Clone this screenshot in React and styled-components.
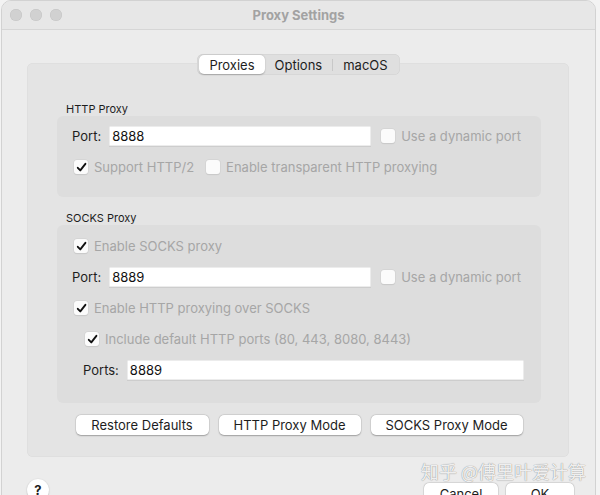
import React from "react";
import styled, { createGlobalStyle } from "styled-components";

const GlobalStyle = createGlobalStyle`
  html, body {
    margin: 0;
    height: 495px;
    overflow: hidden;
    background: #f3f3f3;
  }
  body {
    font-family: Inter, "Liberation Sans", "Noto Sans CJK SC", sans-serif;
    font-size: 13px;
    color: #1d1d1d;
  }
`;

const Window = styled.div`
  position: relative;
  margin-left: 1px;
  width: 593px;
  height: 530px;
  background: #ececec;
  border: 1px solid #d2d2d2;
  border-radius: 10px 10px 0 0;
  overflow: hidden;
`;

const TitleBar = styled.div`
  height: 28px;
  display: grid;
  grid-template-columns: 1fr auto 1fr;
  align-items: center;
  background: #e7e7e7;
  border-bottom: 1px solid #d6d6d6;
  padding: 0 8px;
`;

const Lights = styled.div`
  display: flex;
  gap: 8px;
`;

const Light = styled.span`
  width: 12px;
  height: 12px;
  border-radius: 50%;
  background: #d1d1d1;
  box-shadow: inset 0 0 0 0.5px #c4c4c4;
`;

const Title = styled.div`
  font-weight: 700;
  font-size: 13px;
  color: #a2a2a2;
`;

const Content = styled.div`
  padding: 24px 25px 0 25px;
  display: flex;
  flex-direction: column;
`;

const TabBar = styled.div`
  position: relative;
  z-index: 1;
  align-self: center;
  display: flex;
  align-items: center;
  height: 21px;
  padding: 0 2px;
  background: #dfdfdf;
  border-radius: 6px;
  box-shadow: inset 0 0 0 0.5px #d0d0d0;
`;

const Tab = styled.div`
  height: 19px;
  display: flex;
  align-items: center;
  padding: 0 10px;
  border-radius: 5px;
  font-size: 13px;
  color: #1d1d1d;
  background: ${(p) => (p.$active ? "#ffffff" : "transparent")};
  box-shadow: ${(p) =>
    p.$active ? "0 0.5px 1.5px rgba(0,0,0,0.25)" : "none"};
`;

const TabDivider = styled.span`
  width: 1px;
  height: 12px;
  background: #c8c8c8;
`;

const Panel = styled.div`
  margin-top: -12px;
  margin-right: 1px;
  padding: 39px 28px 22px 30px;
  background: #e4e4e4;
  border-radius: 6px;
  box-shadow: inset 0 0 0 0.5px #dadada;
`;

const SectionLabel = styled.div`
  font-size: 11px;
  line-height: 14px;
  padding-left: 9px;
  margin-top: ${(p) => p.$top || 0}px;
  color: #1d1d1d;
`;

const Box = styled.div`
  background: #dddddd;
  border-radius: 6px;
  padding: ${(p) => p.$pad};
  display: flex;
  flex-direction: column;
  gap: 11px;
`;

const Row = styled.div`
  height: 20px;
  display: flex;
  align-items: center;
  padding-left: ${(p) => p.$indent || 0}px;
`;

const FieldLabel = styled.span`
  font-size: 13px;
  color: #1d1d1d;
  margin-right: 8px;
`;

const Input = styled.div`
  height: 20px;
  box-sizing: border-box;
  width: ${(p) => (p.$width ? `${p.$width}px` : "auto")};
  flex: ${(p) => (p.$width ? "none" : 1)};
  background: #ffffff;
  box-shadow: 0 0.5px 0 #bdbdbd, inset 0 0 0 0.5px #dadada;
  padding-left: 3px;
  display: flex;
  align-items: center;
  font-size: 13px;
  color: #111;
`;

const CheckLabel = styled.label`
  display: flex;
  align-items: center;
  gap: 6px;
  margin-left: ${(p) => p.$left || 0}px;
  color: #a6a6a6;
  font-size: 13px;
`;

const Box14 = styled.span`
  width: 14px;
  height: 14px;
  border-radius: 3px;
  background: #fbfbfb;
  box-shadow: 0 0 0 0.5px #cfcfcf, 0 0.5px 1px rgba(0, 0, 0, 0.12);
  display: flex;
  align-items: center;
  justify-content: center;
`;

function Check({ checked, children, left }) {
  return (
    <CheckLabel $left={left}>
      <Box14>
        {checked && (
          <svg width="11" height="11" viewBox="0 0 11 11">
            <path
              d="M1.8 5.8 L4.3 8.4 L9.4 1.8"
              fill="none"
              stroke="#111"
              strokeWidth="1.9"
              strokeLinecap="round"
              strokeLinejoin="round"
            />
          </svg>
        )}
      </Box14>
      {children}
    </CheckLabel>
  );
}

const ButtonRow = styled.div`
  margin-top: 12px;
  display: flex;
  justify-content: center;
  gap: 10px;
`;

const Button = styled.button`
  height: ${(p) => p.$h || 20}px;
  width: ${(p) => p.$w}px;
  padding: 0;
  border: none;
  border-radius: 5px;
  background: #ffffff;
  font-family: inherit;
  font-size: 13px;
  color: #1d1d1d;
  box-shadow: 0 0.5px 1.5px rgba(0, 0, 0, 0.28), 0 0 0 0.5px rgba(0, 0, 0, 0.08);
`;

const Footer = styled.div`
  display: flex;
  justify-content: space-between;
  align-items: flex-start;
  padding: 22px 0 0 0;
  margin-right: -4px;
`;

const HelpButton = styled.div`
  width: 22px;
  height: 22px;
  border-radius: 50%;
  background: #ffffff;
  box-shadow: 0 0.5px 1.5px rgba(0, 0, 0, 0.3);
  display: flex;
  align-items: center;
  justify-content: center;
  font-weight: 700;
  font-size: 13px;
`;

const DialogButtons = styled.div`
  margin-top: 4px;
  display: flex;
  gap: 8px;
`;

const Watermark = styled.div`
  position: absolute;
  left: 419px;
  top: 457px;
  font-family: "Noto Sans CJK SC", sans-serif;
  font-size: 18px;
  letter-spacing: 0;
  color: rgba(255, 255, 255, 0.9);
  text-shadow: 0 0 1px rgba(0, 0, 0, 0.35), 0 0 1px rgba(0, 0, 0, 0.25);
`;

export default function App() {
  return (
    <>
      <GlobalStyle />
      <Window>
        <TitleBar>
          <Lights>
            <Light />
            <Light />
            <Light />
          </Lights>
          <Title>Proxy Settings</Title>
          <span />
        </TitleBar>
        <Content>
          <TabBar>
            <Tab $active>Proxies</Tab>
            <Tab>Options</Tab>
            <TabDivider />
            <Tab>macOS</Tab>
          </TabBar>
          <Panel>
            <SectionLabel>HTTP Proxy</SectionLabel>
            <Box $pad="10px 17px 20px 15px">
              <Row>
                <FieldLabel>Port:</FieldLabel>
                <Input $width={262}>8888</Input>
                <Check left={10}>Use a dynamic port</Check>
              </Row>
              <Row $indent={2}>
                <Check checked>Support HTTP/2</Check>
                <Check left={12}>Enable transparent HTTP proxying</Check>
              </Row>
            </Box>
            <SectionLabel $top={14}>SOCKS Proxy</SectionLabel>
            <Box $pad="11px 17px 23px 15px">
              <Row $indent={2}>
                <Check checked>Enable SOCKS proxy</Check>
              </Row>
              <Row>
                <FieldLabel>Port:</FieldLabel>
                <Input $width={262}>8889</Input>
                <Check left={10}>Use a dynamic port</Check>
              </Row>
              <Row $indent={2}>
                <Check checked>Enable HTTP proxying over SOCKS</Check>
              </Row>
              <Row $indent={13}>
                <Check checked>Include default HTTP ports (80, 443, 8080, 8443)</Check>
              </Row>
              <Row $indent={11}>
                <FieldLabel>Ports:</FieldLabel>
                <Input>8889</Input>
              </Row>
            </Box>
            <ButtonRow>
              <Button $w={133}>Restore Defaults</Button>
              <Button $w={142}>HTTP Proxy Mode</Button>
              <Button $w={152}>SOCKS Proxy Mode</Button>
            </ButtonRow>
          </Panel>
          <Footer>
            <HelpButton>?</HelpButton>
            <DialogButtons>
              <Button $w={74} $h={22}>Cancel</Button>
              <Button $w={68} $h={22}>OK</Button>
            </DialogButtons>
          </Footer>
        </Content>
        <Watermark>知乎 @傅里叶爱计算</Watermark>
      </Window>
    </>
  );
}
